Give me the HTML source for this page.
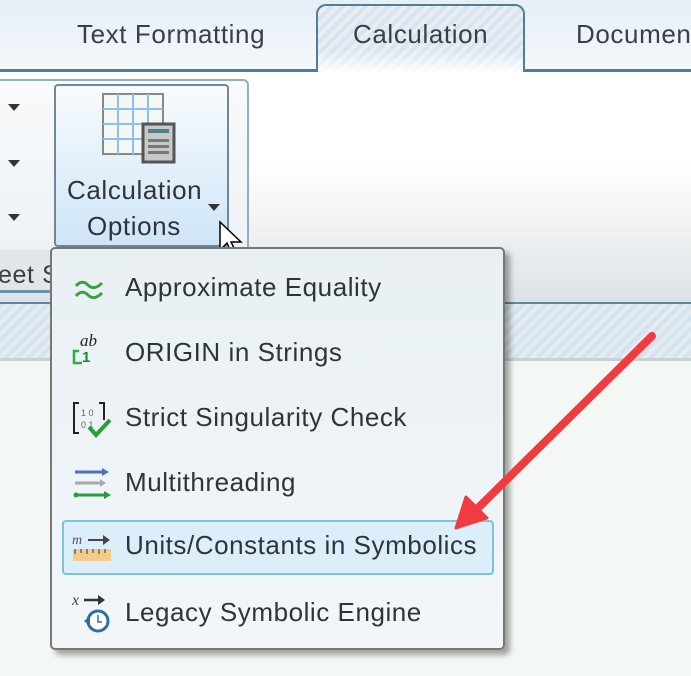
<!DOCTYPE html>
<html><head><style>
body{margin:0;width:691px;height:676px;overflow:hidden;position:relative;background:#f4f8f4;font-family:"Liberation Sans",sans-serif;}
.a{position:absolute}
.hatch{background:repeating-linear-gradient(135deg,#d6e2ec 0 4px,#e4ecf3 4px 8px);}
.t{color:#3a3f45;font-size:26px;letter-spacing:0.6px}
.item{position:absolute;left:0;width:453px;height:54px}
.item span{position:absolute;left:73px;top:10px;font-size:26px;letter-spacing:0.55px;color:#2e343a}
</style></head><body>
<div class="a" style="left:0;top:0;width:691px;height:71px;background:linear-gradient(#e6eef6,#f4f8fb)"></div>
<div class="a" style="left:0;top:69px;width:691px;height:3px;background:#4f7d9e"></div>
<div class="a t" style="left:77px;top:19px">Text Formatting</div>
<div class="a t" style="left:576px;top:19px">Documen</div>
<div class="a" style="left:316px;top:4px;width:205px;height:70px;border:2px solid #4f7d9e;border-bottom:none;border-radius:10px 10px 0 0;background:repeating-linear-gradient(135deg,#d8e4ee 0 4px,#e8eef4 4px 8px);"></div>
<div class="a" style="left:318px;top:50px;width:205px;height:24px;background:linear-gradient(rgba(255,255,255,0),#fff)"></div>
<div class="a t" style="left:353px;top:19px">Calculation</div>
<div class="a" style="left:0;top:72px;width:691px;height:230px;background:linear-gradient(#fff 0%,#fff 40%,#dde2e5 100%)"></div>
<div class="a" style="left:-10px;top:79px;width:255px;height:172px;border:2px solid #8fb0c8;border-radius:6px;background:linear-gradient(#f8fafc,#eef2f4)"></div>
<div class="a" style="left:0;top:250px;width:247px;height:40px;background:#e2e6e8"></div>
<div class="a" style="left:0;top:290px;width:247px;height:3px;background:#6c94b0"></div>
<div class="a" style="left:-2px;top:261px;font-size:25px;letter-spacing:0.6px;color:#3a3f45">eet S</div>
<div class="a" style="left:8px;top:104px;border:6px solid transparent;border-top:7px solid #333"></div>
<div class="a" style="left:8px;top:160px;border:6px solid transparent;border-top:7px solid #333"></div>
<div class="a" style="left:8px;top:214px;border:6px solid transparent;border-top:7px solid #333"></div>
<div class="a" style="left:54px;top:84px;width:171px;height:159px;border:2px solid #6f8796;border-radius:4px;background:linear-gradient(#f8fbfe,#cfe5f7)"></div>
<svg class="a" style="left:100px;top:92px" width="78" height="72">
<rect x="3" y="2" width="60" height="60" fill="#f4f8f4" stroke="#888" stroke-width="2"/>
<g stroke="#8cc0ee" stroke-width="2"><line x1="18" y1="2" x2="18" y2="62"/><line x1="33" y1="2" x2="33" y2="62"/><line x1="48" y1="2" x2="48" y2="62"/><line x1="3" y1="17" x2="63" y2="17"/><line x1="3" y1="32" x2="63" y2="32"/><line x1="3" y1="47" x2="63" y2="47"/></g>
<rect x="43" y="32" width="31" height="38" fill="#c8c8c8" stroke="#555" stroke-width="3"/>
<rect x="48" y="37" width="21" height="4" fill="#4c7f8a"/>
<g fill="#777"><rect x="48" y="47" width="21" height="3"/><rect x="48" y="53" width="21" height="3"/><rect x="48" y="59" width="21" height="3"/></g>
</svg>
<div class="a" style="left:67px;top:175px;font-size:26px;letter-spacing:0.6px;color:#2e343a">Calculation</div>
<div class="a" style="left:87px;top:211px;font-size:26px;letter-spacing:0.6px;color:#2e343a">Options</div>
<div class="a" style="left:208px;top:204px;border:6px solid transparent;border-top:7px solid #333"></div>
<svg class="a" style="left:218px;top:220px" width="30" height="40"><path d="M2 2 L2 30 L9 23 L14 34 L18 32 L13 22 L23 22 Z" fill="#fff" stroke="#000" stroke-width="1.5"/></svg>
<div class="a hatch" style="left:0;top:302px;width:691px;height:56px;border-top:2px solid #5a89a8"></div>
<div class="a" style="left:0;top:358px;width:691px;height:3px;background:#c9cfd3"></div>
<div class="a" style="left:50px;top:247px;width:451px;height:399px;border:2px solid #777;border-radius:5px;background:linear-gradient(#e9f0f4,#f2f6f9);box-shadow:5px 5px 6px rgba(0,0,0,.35)">
<div class="item" style="top:13px"><span>Approximate Equality</span>
<svg class="a" style="left:22px;top:15px" width="30" height="24"><path d="M2 9 Q8 2 14 8 T28 6 M2 19 Q8 12 14 18 T28 16" fill="none" stroke="#3aa040" stroke-width="3"/></svg></div>
<div class="item" style="top:78px"><span>ORIGIN in Strings</span>
<div class="a" style="left:28px;top:4px;font:italic 17px 'Liberation Serif',serif;color:#222">ab</div>
<div class="a" style="left:30px;top:22px;font:bold 15px 'Liberation Sans';color:#1a8a2a">1</div>
<svg class="a" style="left:20px;top:22px" width="12" height="18"><path d="M7 2 L2 2 L2 14 L10 14" fill="none" stroke="#2bb040" stroke-width="2.5"/></svg></div>
<div class="item" style="top:143px"><span>Strict Singularity Check</span>
<svg class="a" style="left:20px;top:8px" width="42" height="40"><path d="M7 3 H2 V33 H7 M27 3 H32 V20" fill="none" stroke="#222" stroke-width="2"/><text x="9" y="16" font-size="9" fill="#666">1 0</text><text x="9" y="28" font-size="9" fill="#666">0 1</text><path d="M17 27 L24 35 L38 20" fill="none" stroke="#2aa038" stroke-width="4"/></svg></div>
<div class="item" style="top:208px"><span>Multithreading</span>
<svg class="a" style="left:20px;top:10px" width="40" height="36"><g stroke-width="3"><path d="M3 5 H33" stroke="#4a70c0"/><path d="M3 16 H30" stroke="#aaa"/><path d="M3 28 H35" stroke="#2a9a40"/></g><path d="M30 1 L37 5 L30 9Z" fill="#4a70c0"/><path d="M28 12 L34 16 L28 20Z" fill="#aaa"/><path d="M32 24 L39 28 L32 32Z" fill="#2a9a40"/><circle cx="4" cy="28" r="2.5" fill="#2a9a40"/></svg></div>
<div class="item" style="top:271px;left:10px;width:428px;height:51px;border:2px solid #7ec0e0;border-radius:4px;background:#ddeefb"><span style="left:61px;top:8px">Units/Constants in Symbolics</span>
<svg class="a" style="left:8px;top:10px" width="42" height="32"><text x="0" y="12" font-size="14" font-style="italic" font-family="Liberation Serif" fill="#555">m</text><path d="M16 8 H34" stroke="#444" stroke-width="2"/><path d="M31 3 L38 8 L31 13Z" fill="#444"/><rect x="1" y="17" width="38" height="12" fill="#f2cc88"/><path d="M3 17v5M9 17v4M15 17v5M21 17v4M27 17v5M33 17v4" stroke="#666" stroke-width="1.5"/></svg></div>
<div class="item" style="top:338px"><span>Legacy Symbolic Engine</span>
<svg class="a" style="left:20px;top:4px" width="42" height="44"><text x="0" y="14" font-size="16" font-style="italic" font-family="Liberation Serif" fill="#444">x</text><path d="M12 9 H28" stroke="#333" stroke-width="2.5"/><path d="M26 4 L33 9 L26 14Z" fill="#333"/><circle cx="26" cy="30" r="10" fill="#fff" stroke="#2b6fa8" stroke-width="3"/><path d="M26 24 V31 H30" stroke="#2b6fa8" stroke-width="1.5" fill="none"/><path d="M12 30 L18 25 L18 35Z" fill="#2b6fa8"/></svg></div>
</div>
<svg class="a" style="left:0;top:0" width="691" height="676"><line x1="652" y1="336" x2="478" y2="508" stroke="#f03c40" stroke-width="8" stroke-linecap="round"/><path d="M456 528 L466 497 L487 518 Z" fill="#f03c40" stroke="#f03c40" stroke-width="3" stroke-linejoin="round"/></svg>
</body></html>
